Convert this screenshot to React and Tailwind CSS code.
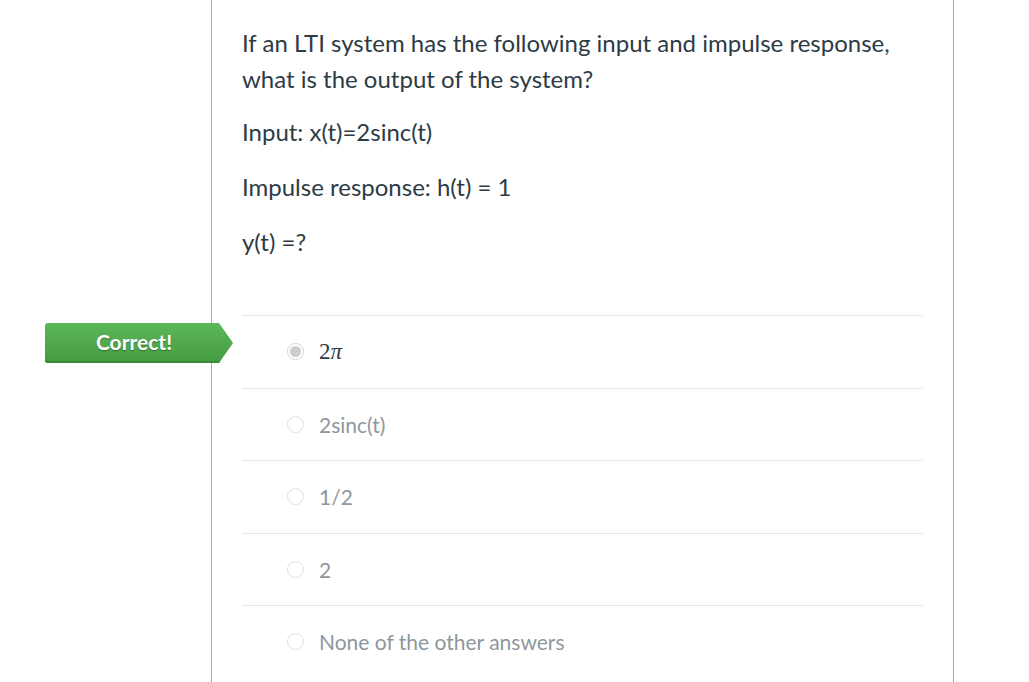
import React from "react";

const options = [
  { label: "2π", math: true, selected: true },
  { label: "2sinc(t)" },
  { label: "1/2" },
  { label: "2" },
  { label: "None of the other answers" },
];

function Radio({ selected }) {
  if (selected) {
    return (
      <span className="flex h-[17px] w-[17px] shrink-0 items-center justify-center rounded-full border border-[#d4d4d4] bg-white">
        <span className="h-[11px] w-[11px] rounded-full bg-[#cdcdcd]" />
      </span>
    );
  }
  return <span className="h-[17px] w-[17px] shrink-0 rounded-full border border-[#e0e0e0] bg-white" />;
}

export default function App() {
  return (
    <div className="relative h-[682px] w-[1029px] overflow-hidden bg-white font-['Lato','Noto_Sans',sans-serif]">
      <div className="flex h-full">
        <div className="w-[211px] shrink-0" />
        <div className="w-[743px] shrink-0 border-x border-[#a8a8a8] pl-[30px] pr-[30px] pt-[25px]">
          <div className="text-[24px] leading-[36px] text-[#2d3b45]">
            <p className="mb-[17px]">
              If an LTI system has the following input and impulse response, what is the output of the system?
            </p>
            <p className="mb-[19px]">Input: x(t)=2sinc(t)</p>
            <p className="mb-[19px]">Impulse response: h(t) = 1</p>
            <p>y(t) =?</p>
          </div>
          <div className="mt-[55px]">
            {options.map((o, i) => (
              <div
                key={i}
                className="flex h-[72.5px] items-center gap-[15px] border-t border-[#e6e6e6] pl-[45px]"
              >
                <Radio selected={o.selected} />
                {o.math ? (
                  <span className="font-['Liberation_Serif',serif] text-[23px] text-[#2d3b45]">
                    2<i>π</i>
                  </span>
                ) : (
                  <span className="text-[21px] text-[#8d979e]">{o.label}</span>
                )}
              </div>
            ))}
          </div>
        </div>
      </div>
      <div className="absolute left-[45px] top-[323px] flex h-[40px] w-[188px] items-center rounded-l-[3px] bg-gradient-to-b from-[#5db85a] to-[#439b3f] pr-[10px] [clip-path:polygon(0_0,174px_0,188px_50%,174px_100%,0_100%)] shadow-[inset_0_-2px_0_#3b8a37]">
        <span className="w-full pb-[2px] text-center text-[21px] font-bold text-white [text-shadow:0_1px_1px_rgba(0,0,0,0.35)]">
          Correct!
        </span>
      </div>
    </div>
  );
}
